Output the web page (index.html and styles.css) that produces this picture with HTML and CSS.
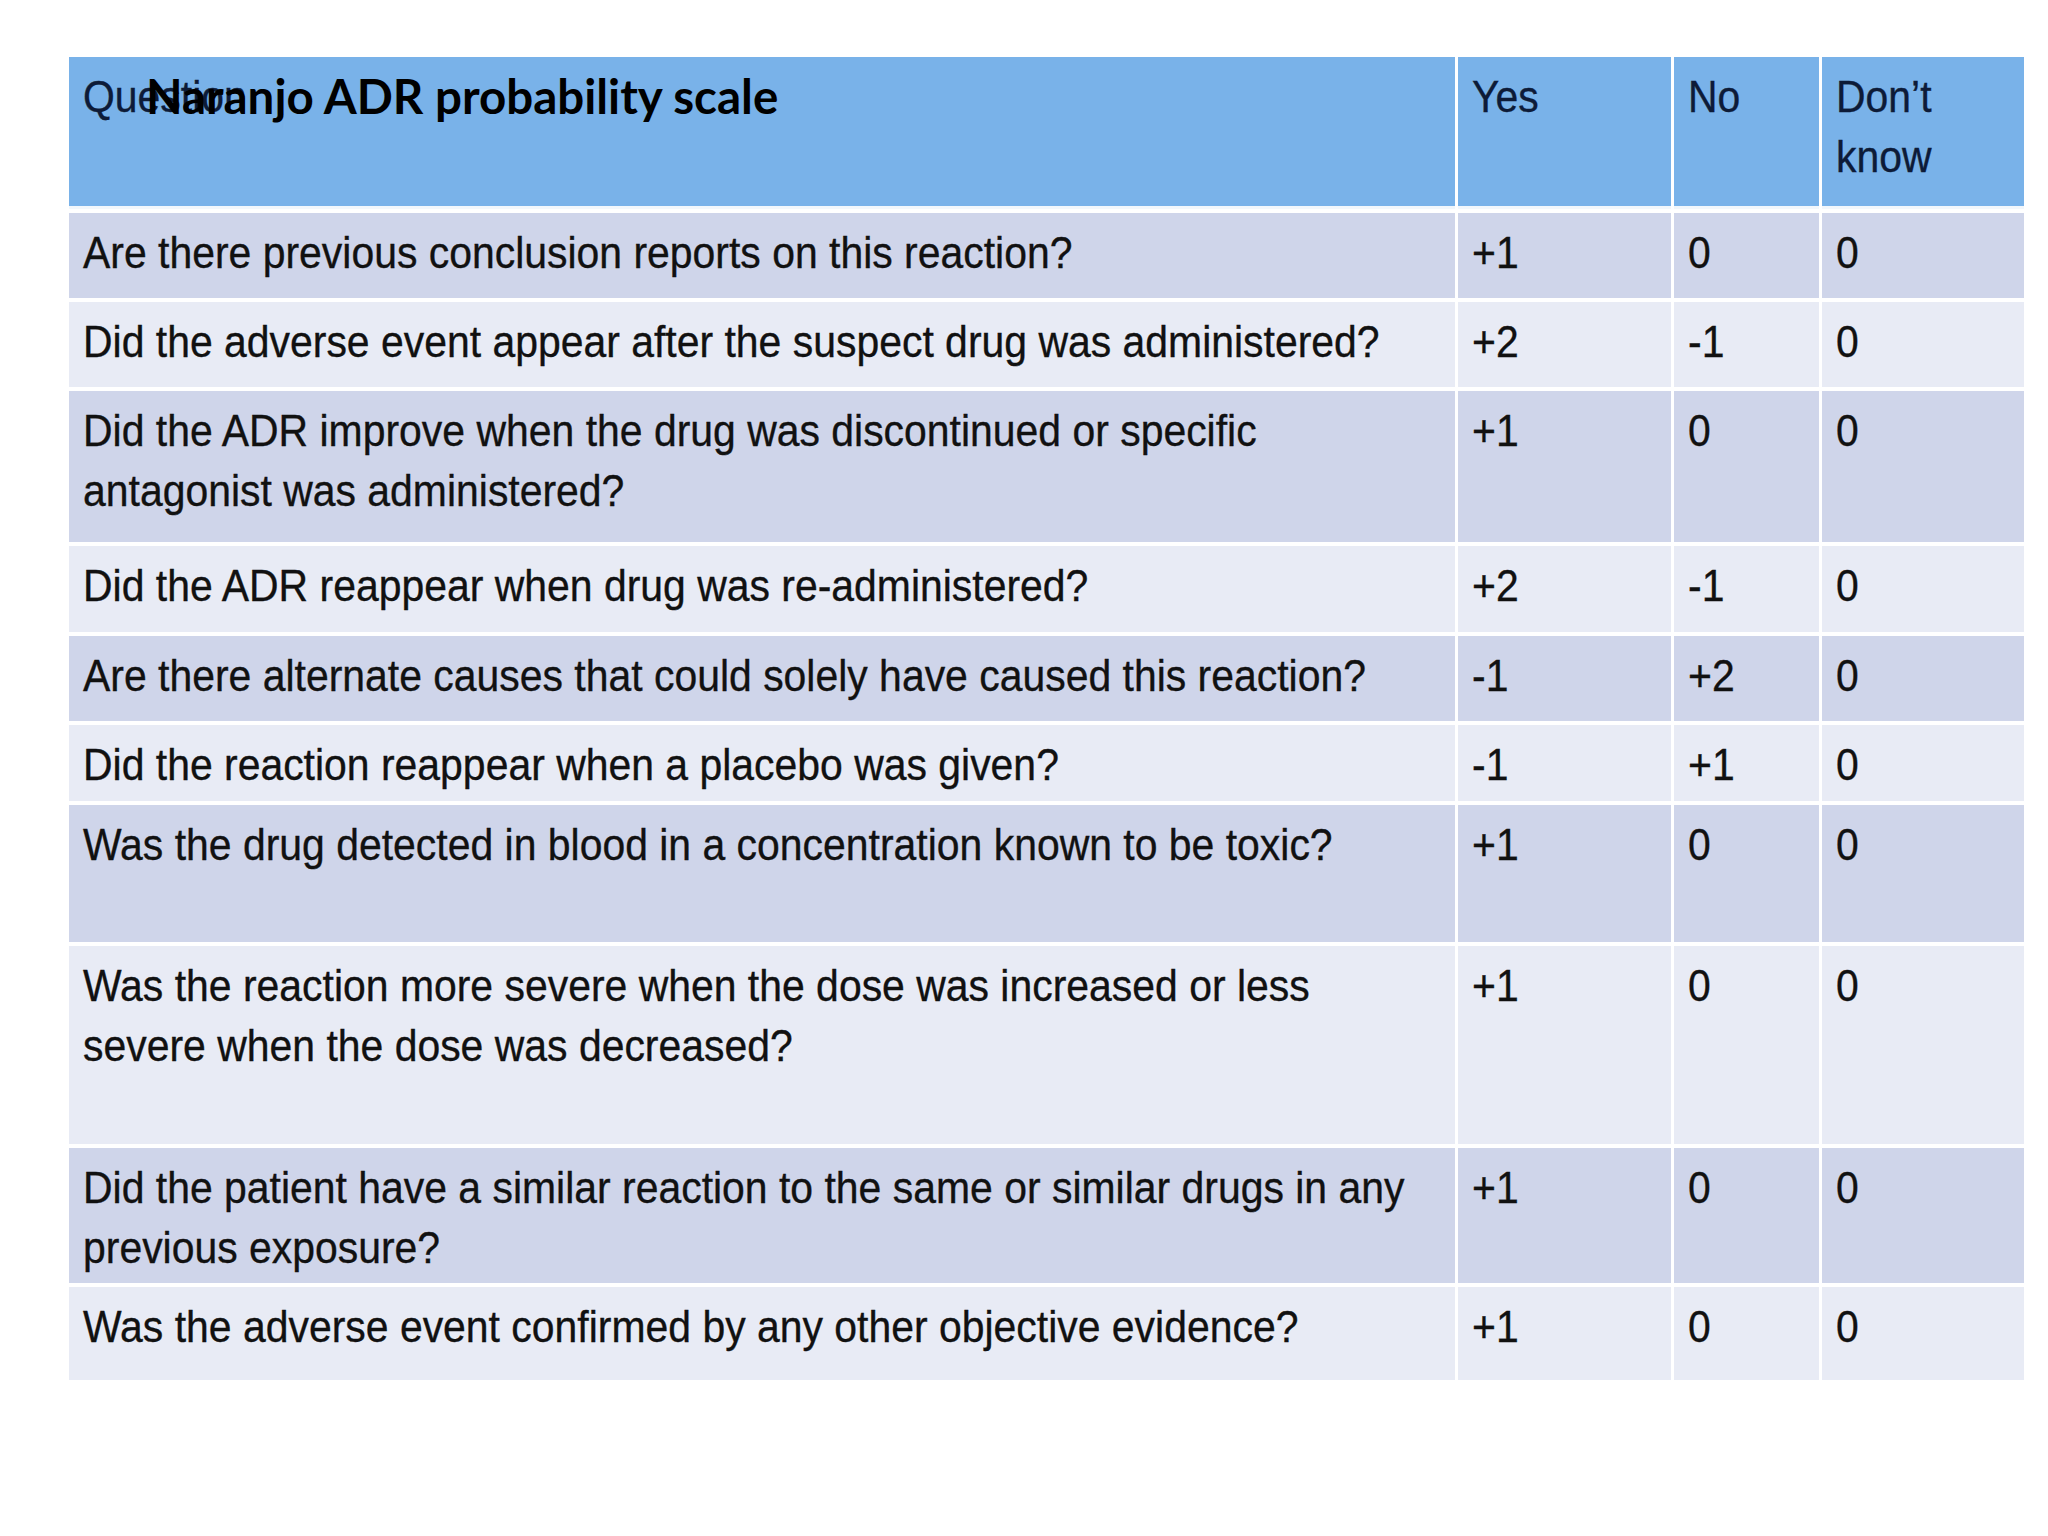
FILE: index.html
```html
<!DOCTYPE html>
<html lang="en">
<head>
<meta charset="utf-8">
<title>Naranjo ADR probability scale</title>
<link rel="stylesheet" href="styles.css">
</head>
<body>
<div class="slide">
  <div class="scale">
    <div class="row head">
      <div class="cell"><span class="t">Question</span></div>
      <div class="cell"><span class="t">Yes</span></div>
      <div class="cell"><span class="t">No</span></div>
      <div class="cell"><span class="t">Don’t<br>know</span></div>
    </div>
    <div class="row odd">
      <div class="cell"><span class="t">Are there previous conclusion reports on this reaction?</span></div>
      <div class="cell"><span class="t">+1</span></div>
      <div class="cell"><span class="t">0</span></div>
      <div class="cell"><span class="t">0</span></div>
    </div>
    <div class="row even">
      <div class="cell"><span class="t">Did the adverse event appear after the suspect drug was administered?</span></div>
      <div class="cell"><span class="t">+2</span></div>
      <div class="cell"><span class="t">-1</span></div>
      <div class="cell"><span class="t">0</span></div>
    </div>
    <div class="row odd">
      <div class="cell"><span class="t">Did the ADR improve when the drug was discontinued or specific<br>antagonist was administered?</span></div>
      <div class="cell"><span class="t">+1</span></div>
      <div class="cell"><span class="t">0</span></div>
      <div class="cell"><span class="t">0</span></div>
    </div>
    <div class="row even">
      <div class="cell"><span class="t">Did the ADR reappear when drug was re-administered?</span></div>
      <div class="cell"><span class="t">+2</span></div>
      <div class="cell"><span class="t">-1</span></div>
      <div class="cell"><span class="t">0</span></div>
    </div>
    <div class="row odd">
      <div class="cell"><span class="t">Are there alternate causes that could solely have caused this reaction?</span></div>
      <div class="cell"><span class="t">-1</span></div>
      <div class="cell"><span class="t">+2</span></div>
      <div class="cell"><span class="t">0</span></div>
    </div>
    <div class="row even">
      <div class="cell"><span class="t">Did the reaction reappear when a placebo was given?</span></div>
      <div class="cell"><span class="t">-1</span></div>
      <div class="cell"><span class="t">+1</span></div>
      <div class="cell"><span class="t">0</span></div>
    </div>
    <div class="row odd">
      <div class="cell"><span class="t">Was the drug detected in blood in a concentration known to be toxic?</span></div>
      <div class="cell"><span class="t">+1</span></div>
      <div class="cell"><span class="t">0</span></div>
      <div class="cell"><span class="t">0</span></div>
    </div>
    <div class="row even">
      <div class="cell"><span class="t">Was the reaction more severe when the dose was increased or less<br>severe when the dose was decreased?</span></div>
      <div class="cell"><span class="t">+1</span></div>
      <div class="cell"><span class="t">0</span></div>
      <div class="cell"><span class="t">0</span></div>
    </div>
    <div class="row odd">
      <div class="cell"><span class="t">Did the patient have a similar reaction to the same or similar drugs in any<br>previous exposure?</span></div>
      <div class="cell"><span class="t">+1</span></div>
      <div class="cell"><span class="t">0</span></div>
      <div class="cell"><span class="t">0</span></div>
    </div>
    <div class="row even">
      <div class="cell"><span class="t">Was the adverse event confirmed by any other objective evidence?</span></div>
      <div class="cell"><span class="t">+1</span></div>
      <div class="cell"><span class="t">0</span></div>
      <div class="cell"><span class="t">0</span></div>
    </div>
  </div>
  <h1 class="title">Naranjo ADR probability scale</h1>
</div>
</body>
</html>
```

FILE: styles.css
```css
html, body {
  margin: 0;
  padding: 0;
  background: #ffffff;
}

.slide {
  position: relative;
  width: 1955px;
  margin: 57px 0 0 69px;
}

.scale {
  display: grid;
  grid-template-columns: 1386px 213px 145px 202px;
  grid-template-rows: 152px 85px 85px 151px 86px 85px 76px 137px 198px 135px 93px;
  column-gap: 3px;
  row-gap: 4px;
  background: #ffffff;
}

.row {
  display: contents;
}

.cell {
  box-sizing: border-box;
  padding: 10px 0 0 14px;
  font-family: "Liberation Sans", Arial, sans-serif;
  font-size: 44px;
  line-height: 60px;
  color: #111111;
  -webkit-text-stroke: 0.35px #111111;
}

.t {
  display: inline-block;
  white-space: nowrap;
  transform: scaleX(0.93);
  transform-origin: 0 0;
}

.head .cell {
  background: #79b2e9;
  color: #0d1b38;
  -webkit-text-stroke: 0.35px #0d1b38;
  border-bottom: 3px solid #f2f7fc;
}

.odd .cell {
  background: #cfd5ea;
}

.even .cell {
  background: #e8ebf5;
}

.title {
  position: absolute;
  left: 77px;
  top: 15px;
  margin: 0;
  font-family: Lato, "Open Sans", sans-serif;
  font-weight: 700;
  font-size: 47.5px;
  line-height: 48px;
  color: #000000;
  white-space: nowrap;
}
```
